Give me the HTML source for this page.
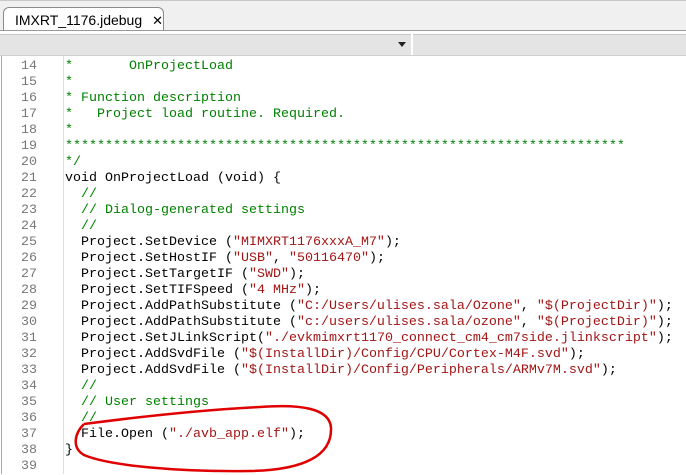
<!DOCTYPE html>
<html><head><style>
body{margin:0;width:686px;height:474px;overflow:hidden;background:#fff;font-family:"Liberation Sans",sans-serif;position:relative}
.tabbar{position:absolute;left:0;top:0;width:686px;height:30px;background:#f0f0f0;border-top:1px solid #c8c8c8}
.tab{position:absolute;left:3px;top:6px;width:161px;height:24px;background:#fff;border:1px solid #8a8a8a;border-bottom:none;border-radius:6px 6px 0 0;font-size:14px;line-height:24px;padding-left:11px;box-sizing:border-box}
.tab span{margin-left:10px;font-size:13px}
.strip{position:absolute;left:0;top:30px;width:686px;height:3px;background:#fff;border-top:1px solid #9a9a9a}
.tool{position:absolute;left:0;top:34px;width:686px;height:20px;background:#e4e4e4;border-top:1px solid #c8c8c8;border-bottom:1px solid #d0d0d0}
.sep{position:absolute;left:411px;top:34px;width:2px;height:21px;background:#fff}
.arrow{position:absolute;left:398px;top:42px;width:0;height:0;border-left:4px solid transparent;border-right:4px solid transparent;border-top:5px solid #222}
.lb{position:absolute;left:1px;top:56px;width:1px;height:418px;background:#aaa}
.gl{position:absolute;left:63px;top:56px;width:1px;height:418px;background:#ddd}
.code{position:absolute;left:0;top:59px;font-family:"Liberation Mono",monospace;font-size:13.33px;line-height:16px;white-space:pre;color:#000}
.n{display:inline-block;width:37px;text-align:right;color:#777;margin-right:28px}
.c{color:#008000}.s{color:#a31515}
</style></head><body>
<div class="tabbar"><div class="tab">IMXRT_1176.jdebug<span>✕</span></div></div>
<div class="strip"></div>
<div class="tool"></div><div class="sep"></div><div class="arrow"></div>
<div class="lb"></div><div class="gl"></div>
<div class="code"><span class="n">14</span><span class="c">*       OnProjectLoad</span>
<span class="n">15</span><span class="c">*</span>
<span class="n">16</span><span class="c">* Function description</span>
<span class="n">17</span><span class="c">*   Project load routine. Required.</span>
<span class="n">18</span><span class="c">*</span>
<span class="n">19</span><span class="c">**********************************************************************</span>
<span class="n">20</span><span class="c">*/</span>
<span class="n">21</span>void OnProjectLoad (void) {
<span class="n">22</span>  <span class="c">//</span>
<span class="n">23</span>  <span class="c">// Dialog-generated settings</span>
<span class="n">24</span>  <span class="c">//</span>
<span class="n">25</span>  Project.SetDevice (<span class="s">"MIMXRT1176xxxA_M7"</span>);
<span class="n">26</span>  Project.SetHostIF (<span class="s">"USB"</span>, <span class="s">"50116470"</span>);
<span class="n">27</span>  Project.SetTargetIF (<span class="s">"SWD"</span>);
<span class="n">28</span>  Project.SetTIFSpeed (<span class="s">"4 MHz"</span>);
<span class="n">29</span>  Project.AddPathSubstitute (<span class="s">"C:/Users/ulises.sala/Ozone"</span>, <span class="s">"$(ProjectDir)"</span>);
<span class="n">30</span>  Project.AddPathSubstitute (<span class="s">"c:/users/ulises.sala/ozone"</span>, <span class="s">"$(ProjectDir)"</span>);
<span class="n">31</span>  Project.SetJLinkScript(<span class="s">"./evkmimxrt1170_connect_cm4_cm7side.jlinkscript"</span>);
<span class="n">32</span>  Project.AddSvdFile (<span class="s">"$(InstallDir)/Config/CPU/Cortex-M4F.svd"</span>);
<span class="n">33</span>  Project.AddSvdFile (<span class="s">"$(InstallDir)/Config/Peripherals/ARMv7M.svd"</span>);
<span class="n">34</span>  <span class="c">//</span>
<span class="n">35</span>  <span class="c">// User settings</span>
<span class="n">36</span>  <span class="c">//</span>
<span class="n">37</span>  File.Open (<span class="s">"./avb_app.elf"</span>);
<span class="n">38</span>}
<span class="n">39</span></div>
<svg style="position:absolute;left:0;top:0" width="686" height="474"><path d="M84,424 C130,418 200,410 260,407 C300,404 330,408 331,428 C332,455 305,470 250,471 C180,472 110,466 84,455 C72,448 74,434 84,424" fill="none" stroke="#e00000" stroke-width="2.5"/></svg>
</body></html>
